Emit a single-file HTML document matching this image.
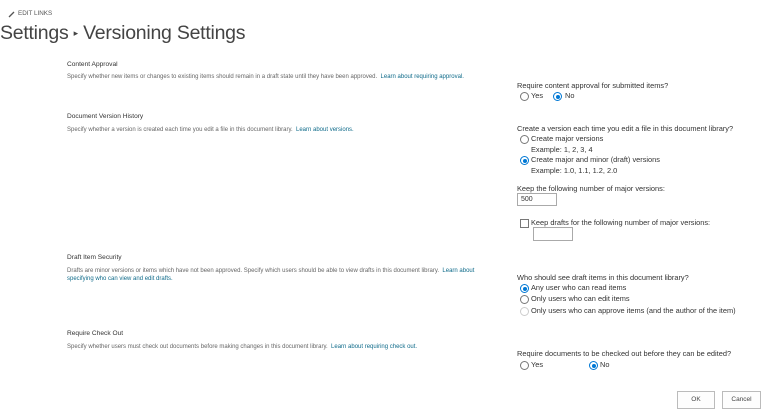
<!DOCTYPE html>
<html><head><meta charset="utf-8"><style>
body{margin:0;width:768px;height:419px;background:#fff;font-family:"Liberation Sans",sans-serif;color:#444;position:relative;overflow:hidden}
.a{position:absolute;white-space:nowrap}
.h{font-size:6.6px;color:#333}
.d{font-size:6px;color:#666}
.l{color:#0f6b8a}
.r{font-size:7.4px;color:#333}
.rad{position:absolute;width:7px;height:7px;border:1px solid #777;border-radius:50%;background:#fff}
.rad.on{border-color:#0078d4}
.rad.on::after{content:"";position:absolute;left:1.5px;top:1.5px;width:4px;height:4px;border-radius:50%;background:#0078d4}
.rad.dis{border-color:#ccc}
.inp{position:absolute;border:1px solid #aaa;background:#fff;font-size:7px;color:#333;box-sizing:border-box;padding:2px 3px}
.btn{position:absolute;border:1px solid #bbb;background:#fdfdfd;font-size:6.5px;color:#444;text-align:center;box-sizing:border-box;line-height:16px}
</style></head><body>
<svg class="a" style="left:8px;top:11px" width="7" height="7" viewBox="0 0 7 7"><path d="M1 6 L6 1" stroke="#555" stroke-width="1.3"/></svg>
<div class="a" style="left:18px;top:10px;font-size:6.3px;color:#555">EDIT LINKS</div>
<div class="a" style="left:0;top:22px;font-size:19.5px;color:#444;letter-spacing:-0.25px">Settings <span style="font-size:9px;position:relative;top:-3px">▸</span> Versioning Settings</div>

<div class="a h" style="left:67px;top:61px">Content Approval</div>
<div class="a d" style="left:67px;top:74px">Specify whether new items or changes to existing items should remain in a draft state until they have been approved. &nbsp;<span class="l">Learn about requiring approval.</span></div>
<div class="a h" style="left:67px;top:113px">Document Version History</div>
<div class="a d" style="left:67px;top:127px">Specify whether a version is created each time you edit a file in this document library. &nbsp;<span class="l">Learn about versions.</span></div>
<div class="a h" style="left:67px;top:254px">Draft Item Security</div>
<div class="a d" style="left:67px;top:268px">Drafts are minor versions or items which have not been approved. Specify which users should be able to view drafts in this document library. &nbsp;<span class="l">Learn about</span></div>
<div class="a d l" style="left:67px;top:276px">specifying who can view and edit drafts.</div>
<div class="a h" style="left:67px;top:330px">Require Check Out</div>
<div class="a d" style="left:67px;top:344px">Specify whether users must check out documents before making changes in this document library. &nbsp;<span class="l">Learn about requiring check out.</span></div>

<div class="a r" style="left:517px;top:81px">Require content approval for submitted items?</div>
<div class="rad" style="left:520px;top:92px"></div><div class="a r" style="left:531px;top:91px">Yes</div>
<div class="rad on" style="left:553px;top:92px"></div><div class="a r" style="left:565px;top:91px">No</div>

<div class="a r" style="left:517px;top:124px">Create a version each time you edit a file in this document library?</div>
<div class="rad" style="left:520px;top:135px"></div><div class="a r" style="left:531px;top:134px">Create major versions</div>
<div class="a r" style="left:531px;top:145px">Example: 1, 2, 3, 4</div>
<div class="rad on" style="left:520px;top:156px"></div><div class="a r" style="left:531px;top:155px">Create major and minor (draft) versions</div>
<div class="a r" style="left:531px;top:166px">Example: 1.0, 1.1, 1.2, 2.0</div>
<div class="a r" style="left:517px;top:184px">Keep the following number of major versions:</div>
<div class="inp" style="left:517px;top:193px;width:40px;height:13px">500</div>
<div class="a" style="left:520px;top:219px;width:7px;height:7px;border:1px solid #777"></div>
<div class="a r" style="left:531px;top:218px">Keep drafts for the following number of major versions:</div>
<div class="inp" style="left:533px;top:227px;width:40px;height:14px"></div>

<div class="a r" style="left:517px;top:273px">Who should see draft items in this document library?</div>
<div class="rad on" style="left:520px;top:284px"></div><div class="a r" style="left:531px;top:283px">Any user who can read items</div>
<div class="rad" style="left:520px;top:295px"></div><div class="a r" style="left:531px;top:294px">Only users who can edit items</div>
<div class="rad dis" style="left:520px;top:307px"></div><div class="a r" style="left:531px;top:306px">Only users who can approve items (and the author of the item)</div>

<div class="a r" style="left:517px;top:349px">Require documents to be checked out before they can be edited?</div>
<div class="rad" style="left:520px;top:361px"></div><div class="a r" style="left:531px;top:360px">Yes</div>
<div class="rad on" style="left:589px;top:361px"></div><div class="a r" style="left:600px;top:360px">No</div>

<div class="btn" style="left:677px;top:391px;width:38px;height:18px">OK</div>
<div class="btn" style="left:722px;top:391px;width:39px;height:18px">Cancel</div>
</body></html>
